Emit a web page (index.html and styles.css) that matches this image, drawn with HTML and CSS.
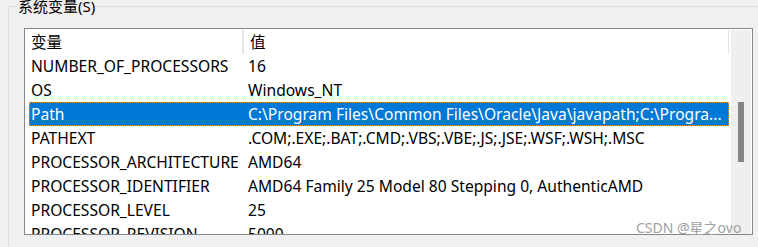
FILE: index.html
```html
<!DOCTYPE html>
<html lang="zh-CN">
<head>
    <meta charset="UTF-8">
    <title>系统变量</title>
    <link rel="stylesheet" href="styles.css">
</head>
<body>
    <div class="group">
        <span class="group-label">系统变量(S)</span>
        <div class="listbox">
            <div class="view">
                <div class="row header">
                    <div class="col name">变量</div>
                    <div class="col value">值</div>
                </div>
                <div class="row"><div class="col name">NUMBER_OF_PROCESSORS</div><div class="col value">16</div></div>
                <div class="row"><div class="col name">OS</div><div class="col value">Windows_NT</div></div>
                <div class="row selected"><div class="col name">Path</div><div class="col value">C:\Program Files\Common Files\Oracle\Java\javapath;C:\Progra...</div></div>
                <div class="row"><div class="col name">PATHEXT</div><div class="col value">.COM;.EXE;.BAT;.CMD;.VBS;.VBE;.JS;.JSE;.WSF;.WSH;.MSC</div></div>
                <div class="row"><div class="col name">PROCESSOR_ARCHITECTURE</div><div class="col value">AMD64</div></div>
                <div class="row"><div class="col name">PROCESSOR_IDENTIFIER</div><div class="col value">AMD64 Family 25 Model 80 Stepping 0, AuthenticAMD</div></div>
                <div class="row"><div class="col name">PROCESSOR_LEVEL</div><div class="col value">25</div></div>
                <div class="row"><div class="col name">PROCESSOR_REVISION</div><div class="col value">5000</div></div>
            </div>
            <div class="scrollbar"><div class="thumb"></div></div>
        </div>
        <span class="watermark">CSDN @星之ovo</span>
    </div>
</body>
</html>
```

FILE: styles.css
```css
body {
    margin: 0;
    background-color: #f0f0f0;
    font-family: "Noto Sans", "Noto Sans CJK SC", sans-serif;
    font-size: 15.6px;
    color: #000;
    overflow: hidden;
}

.group {
    position: relative;
    margin: 6px 0 0 8px;
    height: 240px;
    border-top: 1px solid #dcdcdc;
    border-left: 1px solid #dcdcdc;
}

.group-label {
    position: absolute;
    top: -10px;
    left: 8px;
    padding: 0 1px;
    background-color: #f0f0f0;
    font-size: 15px;
    line-height: 18px;
}

.listbox {
    display: flex;
    margin: 21px 0 0 15px;
    width: 727px;
    height: 205px;
    border: 1px solid #828790;
    background-color: #fff;
}

.view {
    flex: 1;
    overflow: hidden;
    padding: 1px 0 0 4px;
}

.row {
    display: flex;
    width: 700px;
    height: 24px;
    line-height: 24px;
    white-space: nowrap;
}

.col {
    overflow: hidden;
}

.name {
    width: 211px;
    padding-left: 2px;
}

.value {
    flex: 1;
    padding-left: 6px;
}

.header .name {
    border-right: 2px solid #e5e5e5;
}

.header .value {
    border-right: 1px solid #e5e5e5;
}

.selected {
    background-color: #0078d7;
    color: #fff;
    outline: 1px dotted #f09a3a;
    outline-offset: -1px;
}

.scrollbar {
    width: 20px;
    margin: 1px 1px 0 0;
    background-color: #efefef;
}

.thumb {
    margin: 72px 0 0 7px;
    width: 6px;
    height: 60px;
    background-color: #858585;
}

.watermark {
    position: absolute;
    left: 627px;
    top: 212px;
    font-size: 14px;
    color: #a0a0a0;
    line-height: 18px;
}
```
